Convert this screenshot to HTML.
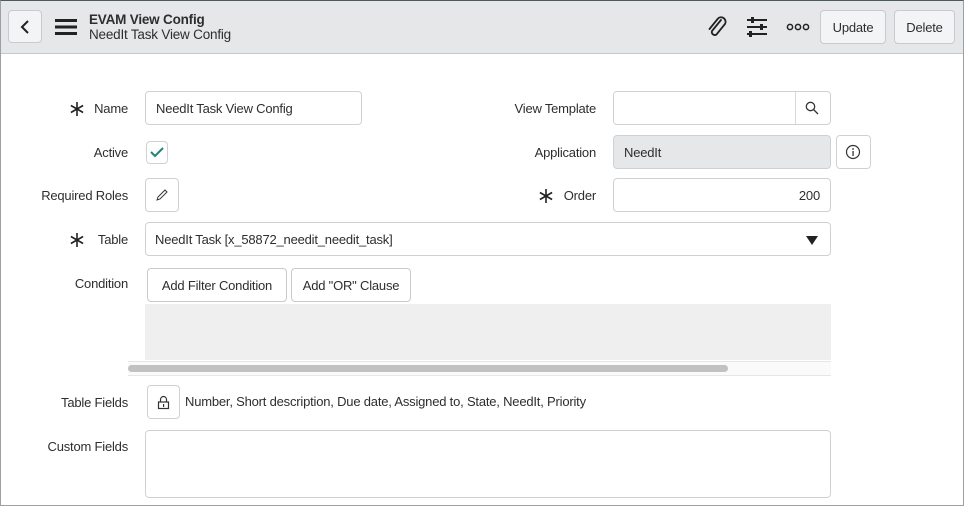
<!DOCTYPE html>
<html><head><style>
*{box-sizing:border-box;margin:0;padding:0}
body{width:964px;height:506px;overflow:hidden;background:#fff;font-family:"Liberation Sans",sans-serif;font-size:13px;color:#2e2e2e;position:relative;letter-spacing:-0.2px}
.frame{position:absolute;left:0;top:0;width:964px;height:506px;border:1px solid #9aa0a4;border-top:1px solid #4d5a5e}
.hdr{position:absolute;left:1px;top:1px;right:1px;height:53px;background:#e5e7e9;border-bottom:1px solid #c5c9cc}
.a{position:absolute}
.btn{position:absolute;border:1px solid #c8cbce;border-radius:4px;background:#f6f7f8}
.inp{position:absolute;border:1px solid #cfd2d5;border-radius:4px;background:#fff}
.lbl{position:absolute;text-align:right;font-size:13px;color:#2e2e2e}
</style></head><body>
<svg width="0" height="0" style="position:absolute"><defs><g id="ast" stroke="#222" stroke-width="1.6"><line x1="7" y1="0" x2="7" y2="14"/><line x1="0.9" y1="3.5" x2="13.1" y2="10.5"/><line x1="0.9" y1="10.5" x2="13.1" y2="3.5"/></g></defs></svg>
<div class="hdr"></div>
<div class="btn" style="left:8px;top:10px;width:34px;height:33px;background:#f3f4f5"></div>
<svg class="a" style="left:18px;top:18px" width="14" height="18"><path d="M10 3 L4 9 L10 15" stroke="#222" stroke-width="2" fill="none"/></svg>
<svg class="a" style="left:55px;top:18px" width="22" height="18"><rect x="0" y="1" width="22" height="3" fill="#222"/><rect x="0" y="7.5" width="22" height="3" fill="#222"/><rect x="0" y="14" width="22" height="3" fill="#222"/></svg>
<div class="a" style="left:89px;top:12px;font-weight:bold;font-size:13.5px">EVAM View Config</div>
<div class="a" style="left:89px;top:27px;font-size:13.5px">NeedIt Task View Config</div>
<svg class="a" style="left:704px;top:14px" width="26" height="26"><path d="M17 6 L8 17 a3 3 0 0 0 4.5 3.5 L21 10 a4.5 4.5 0 0 0 -7 -5.5 L5.5 15" stroke="#222" stroke-width="1.8" fill="none" stroke-linecap="round"/></svg>
<svg class="a" style="left:746px;top:16px" width="22" height="22"><g stroke="#222" stroke-width="2"><line x1="1" y1="4" x2="21" y2="4"/><line x1="1" y1="11" x2="21" y2="11"/><line x1="1" y1="18" x2="21" y2="18"/></g><rect x="5" y="1" width="3" height="6" fill="#222"/><rect x="14" y="8" width="3" height="6" fill="#222"/><rect x="3" y="15" width="3" height="6" fill="#222"/></svg>
<svg class="a" style="left:786px;top:23px" width="24" height="8"><g stroke="#222" stroke-width="1.5" fill="none"><circle cx="4" cy="4" r="2.6"/><circle cx="12" cy="4" r="2.6"/><circle cx="20" cy="4" r="2.6"/></g></svg>
<div class="btn" style="left:820px;top:10px;width:66px;height:34px;background:#f3f4f5;line-height:33px;text-align:center">Update</div>
<div class="btn" style="left:894px;top:10px;width:61px;height:34px;background:#f3f4f5;line-height:33px;text-align:center">Delete</div>

<svg class="a" style="left:70px;top:102px" width="14" height="14"><use href="#ast"/></svg>
<div class="lbl" style="left:80px;top:101px;width:48px">Name</div>
<div class="inp" style="left:145px;top:91px;width:217px;height:34px;padding:9px 10px">NeedIt Task View Config</div>
<div class="lbl" style="left:60px;top:145px;width:68px">Active</div>
<div class="inp" style="left:146px;top:141px;width:22px;height:23px"></div>
<svg class="a" style="left:149px;top:145px" width="16" height="14"><path d="M2 7 L6 11 L14 3" stroke="#1e8573" stroke-width="2" fill="none"/></svg>
<div class="lbl" style="left:20px;top:188px;width:108px">Required Roles</div>
<div class="inp" style="left:145px;top:178px;width:34px;height:34px"></div>
<svg class="a" style="left:155px;top:188px" width="14" height="14"><path d="M2 12 L3 9 L10 2 L12 4 L5 11 Z" stroke="#333" stroke-width="1" fill="none"/></svg>
<svg class="a" style="left:70px;top:233px" width="14" height="14"><use href="#ast"/></svg>
<div class="lbl" style="left:80px;top:232px;width:48px">Table</div>
<div class="inp" style="left:145px;top:222px;width:686px;height:34px;padding:9px 9px">NeedIt Task [x_58872_needit_needit_task]</div>
<svg class="a" style="left:805px;top:234px" width="14" height="12"><path d="M1 2 L13 2 L7 11 Z" fill="#222"/></svg>
<div class="lbl" style="left:40px;top:276px;width:88px">Condition</div>
<div class="btn" style="left:147px;top:268px;width:140px;height:34px;background:#fff;line-height:34px;text-align:center">Add Filter Condition</div>
<div class="btn" style="left:291px;top:268px;width:120px;height:34px;background:#fff;line-height:34px;text-align:center">Add "OR" Clause</div>
<div class="a" style="left:145px;top:304px;width:686px;height:56px;background:#efefef"></div>
<div class="a" style="left:128px;top:361px;width:703px;height:15px;background:#fafafa;border-top:1px solid #e6e6e6;border-bottom:1px solid #e6e6e6"></div>
<div class="a" style="left:128px;top:365px;width:600px;height:7px;background:#c1c1c1;border-radius:4px"></div>
<div class="lbl" style="left:20px;top:395px;width:108px">Table Fields</div>
<div class="inp" style="left:147px;top:385px;width:33px;height:34px"></div>
<svg class="a" style="left:157px;top:395px" width="13" height="15"><path d="M3.5 7 V4.5 a3 3 0 0 1 6 0 V7" stroke="#333" stroke-width="1.2" fill="none"/><rect x="1.5" y="7" width="10" height="6.5" stroke="#333" stroke-width="1.2" fill="none"/><rect x="6" y="9" width="1.2" height="3" fill="#333"/></svg>
<div class="a" style="left:185px;top:394px">Number, Short description, Due date, Assigned to, State, NeedIt, Priority</div>
<div class="lbl" style="left:20px;top:439px;width:108px">Custom Fields</div>
<div class="inp" style="left:145px;top:430px;width:686px;height:68px"></div>

<div class="lbl" style="left:480px;top:101px;width:116px">View Template</div>
<div class="inp" style="left:613px;top:91px;width:218px;height:34px"></div>
<div class="a" style="left:795px;top:92px;width:1px;height:32px;background:#d6d8da"></div>
<svg class="a" style="left:805px;top:101px" width="14" height="14"><circle cx="5.5" cy="5.5" r="4.2" stroke="#333" stroke-width="1.3" fill="none"/><line x1="8.5" y1="8.5" x2="13" y2="13" stroke="#333" stroke-width="1.3"/></svg>
<div class="lbl" style="left:480px;top:145px;width:116px">Application</div>
<div class="inp" style="left:613px;top:135px;width:218px;height:34px;background:#e5e7e9;padding:9px 10px">NeedIt</div>
<div class="inp" style="left:836px;top:135px;width:35px;height:34px"></div>
<svg class="a" style="left:845px;top:144px" width="16" height="16"><circle cx="8" cy="8" r="6.5" stroke="#333" stroke-width="1.2" fill="none"/><rect x="7.4" y="7" width="1.3" height="5" fill="#333"/><circle cx="8" cy="5" r="0.9" fill="#333"/></svg>
<svg class="a" style="left:539px;top:189px" width="14" height="14"><use href="#ast"/></svg>
<div class="lbl" style="left:550px;top:188px;width:46px">Order</div>
<div class="inp" style="left:613px;top:178px;width:218px;height:34px;padding:9px 10px;text-align:right">200</div>
<div class="frame"></div>
</body></html>
